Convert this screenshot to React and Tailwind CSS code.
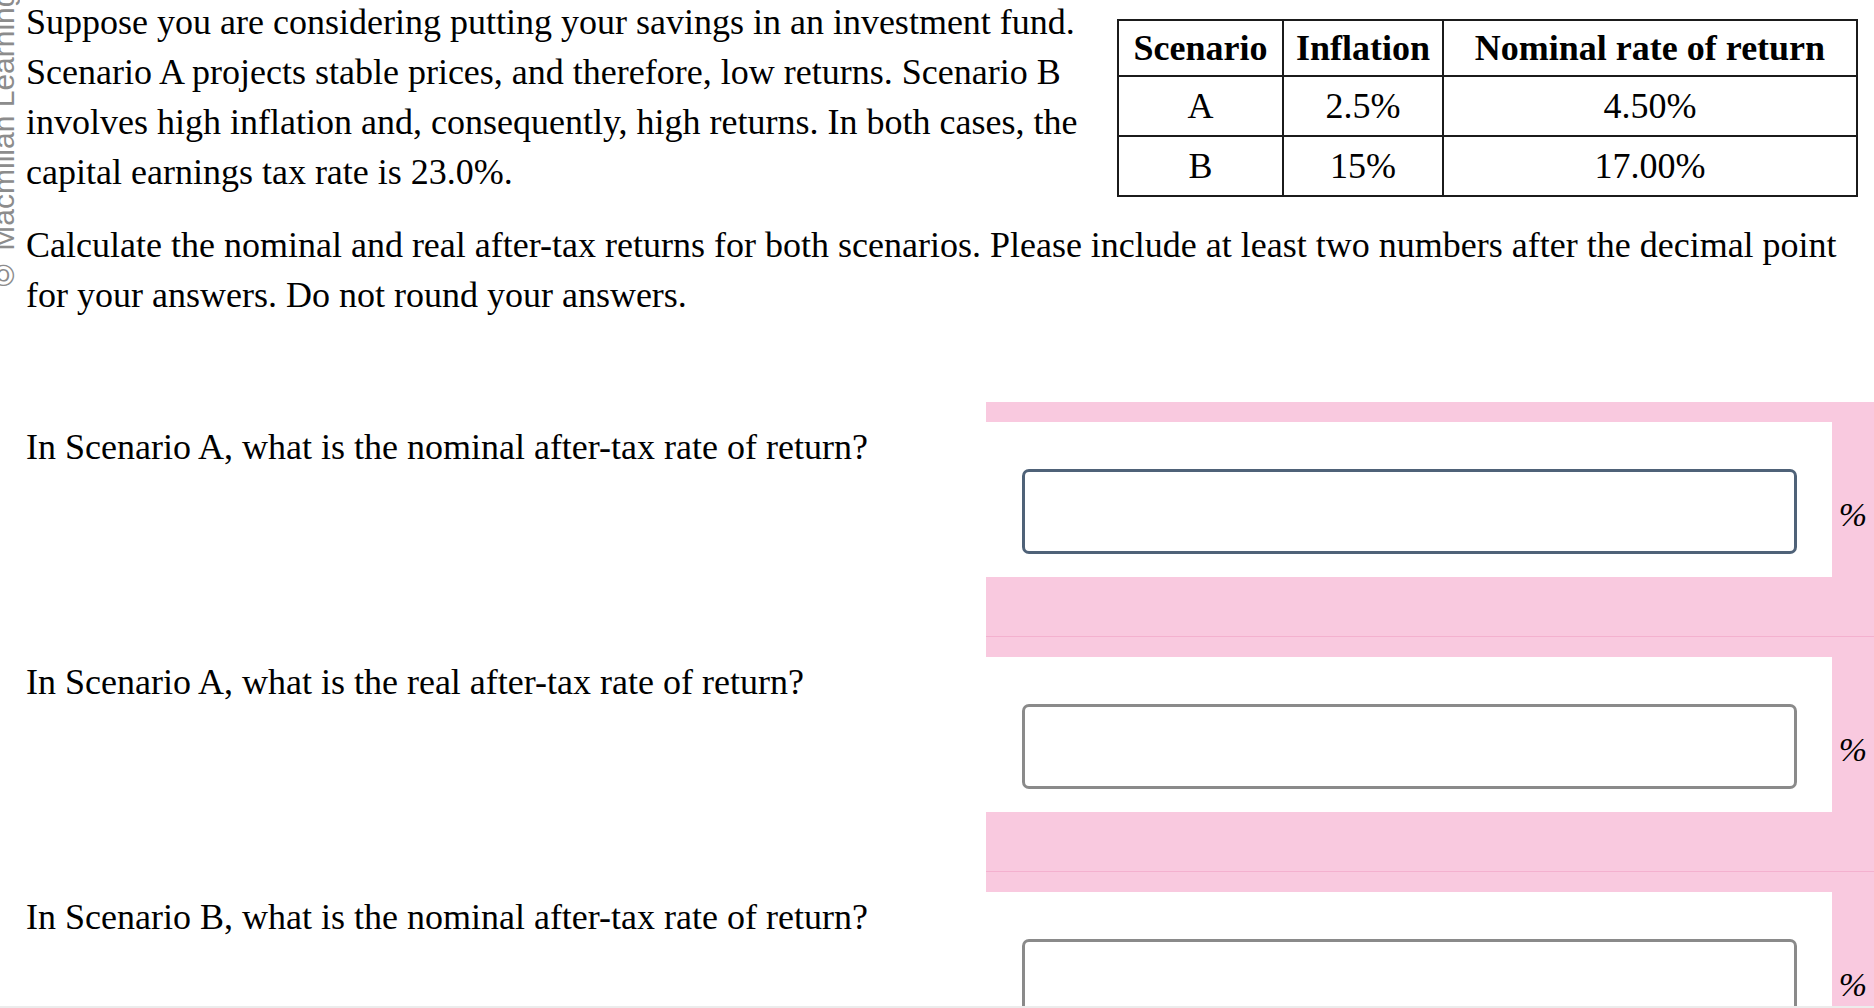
const questions = [
    { text: 'In Scenario A, what is the nominal after-tax rate of return?', focused: true },
    { text: 'In Scenario A, what is the real after-tax rate of return?', focused: false },
    { text: 'In Scenario B, what is the nominal after-tax rate of return?', focused: false },
];

const rows = [
    ['A', '2.5%', '4.50%'],
    ['B', '15%', '17.00%'],
];

const Question = ({ text, focused }) => (
    <div className="flex">
        <div className="w-[960px] pt-[20px]">{text}</div>
        <div className="flex-1 bg-[#f9c9df] pt-[20px] pb-[59px] border-b border-[#f4b1cf]">
            <div className="flex">
                <div className="w-[846px] h-[155px] bg-white pl-[36px] pt-[47px]">
                    <input
                        type="text"
                        className={`block w-[775px] h-[85px] rounded-[7px] border-[3px] bg-white outline-none ${focused ? 'border-[#4f6278]' : 'border-[#8a8a8a]'}`}
                    />
                </div>
                <div className="flex-1 text-center pt-[68px] text-[34px] italic">%</div>
            </div>
        </div>
    </div>
);

const App = () => {
    return (
        <div className="relative min-h-screen bg-white pl-[26px] text-black font-['Liberation_Serif','Times_New_Roman',serif] text-[36px] leading-[50px] overflow-hidden">
            <div className="absolute left-[-11px] top-[-6px] h-[298px] rotate-180 [writing-mode:vertical-rl] text-[30px] leading-[30px] text-[#8c8c8c] font-['Liberation_Sans',Arial,sans-serif] whitespace-nowrap">
                © Macmillan Learning
            </div>

            <div className="flex items-start">
                <p className="w-[1074px] -mt-[3px] shrink-0">
                    Suppose you are considering putting your savings in an investment fund. Scenario A projects stable prices, and therefore, low returns. Scenario B involves high inflation and, consequently, high returns. In both cases, the capital earnings tax rate is 23.0%.
                </p>
                <table className="ml-[17px] mt-[19px] border-collapse border-2 border-[#1b1b1b]">
                    <thead>
                        <tr>
                            <th className="w-[165px] h-[56px] border-2 border-[#1b1b1b] font-bold p-0">Scenario</th>
                            <th className="w-[160px] h-[56px] border-2 border-[#1b1b1b] font-bold p-0">Inflation</th>
                            <th className="w-[414px] h-[56px] border-2 border-[#1b1b1b] font-bold p-0">Nominal rate of return</th>
                        </tr>
                    </thead>
                    <tbody>
                        {rows.map((r) => (
                            <tr key={r[0]}>
                                {r.map((c, i) => (
                                    <td key={i} className="h-[60px] border-2 border-[#1b1b1b] text-center p-0">{c}</td>
                                ))}
                            </tr>
                        ))}
                    </tbody>
                </table>
            </div>

            <p className="mt-[23px] pr-[20px]">
                Calculate the nominal and real after-tax returns for both scenarios. Please include at least two numbers after the decimal point for your answers. Do not round your answers.
            </p>

            <div className="mt-[82px] -ml-[26px] pl-[26px]">
                {questions.map((q) => (
                    <Question key={q.text} text={q.text} focused={q.focused} />
                ))}
            </div>

            <div className="fixed bottom-0 left-0 right-0 h-[2px] bg-[#ececec]" />
        </div>
    )
}

export default App
